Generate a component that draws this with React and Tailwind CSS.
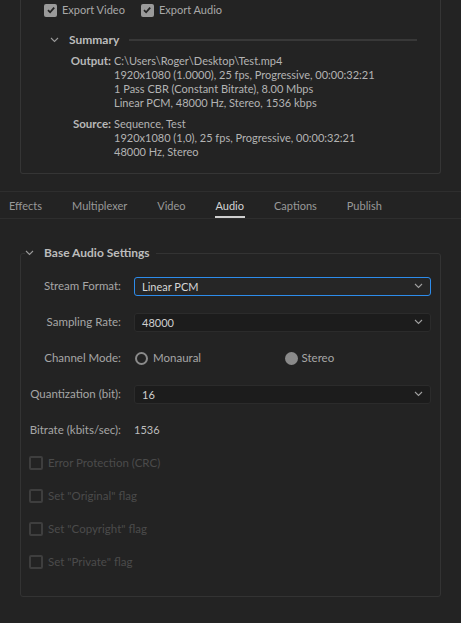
import React from "react";

const Chevron = ({ className = "" }) => (
  <svg width="9" height="6" viewBox="0 0 9 6" className={className}>
    <path d="M1 1 L4.5 4.5 L8 1" fill="none" stroke="currentColor" strokeWidth="1.1" />
  </svg>
);

const CheckOn = () => (
  <span className="w-[13px] h-[13px] rounded-[2px] bg-[#9a9a9a] flex items-center justify-center">
    <svg width="10" height="10" viewBox="0 0 10 10">
      <path d="M2 5.2 L4.1 7.3 L8.2 2.6" fill="none" stroke="#232323" strokeWidth="1.8" />
    </svg>
  </span>
);

const CheckOff = () => (
  <span className="w-[14px] h-[14px] rounded-[2px] border-2 border-[#3e3e3e] shrink-0" />
);

const Select = ({ value, focused }) => (
  <div
    className={
      "flex-1 h-[19px] rounded-[3px] flex items-center justify-between pl-[7px] pr-[7px] text-[11px] " +
      (focused
        ? "bg-[#262626] border border-[#2d8ceb] text-[#d6d6d6]"
        : "bg-[#1c1c1c] border border-[#2b2b2b] text-[#cfcfcf]")
    }
  >
    <span className="leading-none">{value}</span>
    <Chevron className="text-[#a0a0a0]" />
  </div>
);

const Row = ({ label, children, className = "" }) => (
  <div className={"flex items-center h-[20px] " + className}>
    <div className="w-[101px] text-right pr-[1px] text-[#a6a6a6] whitespace-nowrap text-[11.5px]">{label}</div>
    <div className="ml-[12px] w-[297px] flex items-center">{children}</div>
  </div>
);

const DisabledCheck = ({ label, className = "" }) => (
  <div className={"flex items-center gap-[5px] pl-[8px] h-[16px] text-[#4b4b4b] text-[11.5px] " + className}>
    <CheckOff />
    <span>{label}</span>
  </div>
);

export default function App() {
  const tabs = ["Effects", "Multiplexer", "Video", "Audio", "Captions", "Publish"];
  return (
    <div
      className="w-[461px] h-[623px] bg-[#232323] overflow-hidden text-[11px] leading-[14px]"
      style={{ fontFamily: "Lato, 'Noto Sans', sans-serif" }}
    >
      {/* Top summary panel */}
      <div className="ml-[20px] w-[421px] h-[174px] border-x border-b border-[#353535] rounded-b-[3px] flex flex-col">
        <div className="flex items-center h-[20px] pl-[23px] text-[#a8a8a8]">
          <div className="flex items-center gap-[5px]">
            <CheckOn />
            <span>Export Video</span>
          </div>
          <div className="flex items-center gap-[5px] ml-[16px]">
            <CheckOn />
            <span>Export Audio</span>
          </div>
        </div>
        <div className="flex items-center h-[20px] mt-[10px] pl-[29px]">
          <Chevron className="text-[#9a9a9a]" />
          <span className="ml-[10px] font-bold text-[#bcbcbc] text-[12px]">Summary</span>
          <div className="ml-[10px] flex-1 h-[2px] bg-[#383838] mr-[23px]" />
        </div>
        <div className="mt-[4px] flex flex-col gap-[7px] text-[#b3b3b3]">
          <div className="flex">
            <div className="w-[90px] text-right font-bold text-[#b8b8b8] text-[11.5px]">Output:</div>
            <div className="ml-[3px] flex flex-col">
              <span>C:\Users\Roger\Desktop\Test.mp4</span>
              <span>1920x1080 (1.0000), 25 fps, Progressive, 00:00:32:21</span>
              <span>1 Pass CBR (Constant Bitrate), 8.00 Mbps</span>
              <span>Linear PCM, 48000 Hz, Stereo, 1536 kbps</span>
            </div>
          </div>
          <div className="flex">
            <div className="w-[90px] text-right font-bold text-[#b8b8b8] text-[11.5px]">Source:</div>
            <div className="ml-[3px] flex flex-col">
              <span>Sequence, Test</span>
              <span>1920x1080 (1,0), 25 fps, Progressive, 00:00:32:21</span>
              <span>48000 Hz, Stereo</span>
            </div>
          </div>
        </div>
      </div>

      {/* Tabs */}
      <div className="mt-[17px] border-t border-[#2e2e2e] border-b h-[28px] flex items-stretch pl-[9px] gap-[30px] text-[11px]">
        {tabs.map((t) => (
          <div
            key={t}
            className={
              "flex items-center relative " +
              (t === "Audio" ? "text-[#d4d4d4]" : "text-[#999999]")
            }
          >
            <span className="pt-[2px]">{t}</span>
            {t === "Audio" && (
              <span className="absolute left-[-1px] right-[-1px] bottom-[0px] h-[2px] bg-[#cfcfcf]" />
            )}
          </div>
        ))}
      </div>

      {/* Base Audio Settings */}
      <fieldset className="ml-[20px] mt-[27px] w-[421px] h-[351px] border border-[#333333] rounded-[3px] px-0">
        <legend className="ml-[4px] flex items-center pr-[6px]">
          <Chevron className="text-[#9a9a9a]" />
          <span className="ml-[10px] font-bold text-[#bcbcbc] text-[12px]">Base Audio Settings</span>
        </legend>
        <div className="flex flex-col pt-[16px]">
          <Row label="Stream Format:">
            <Select value="Linear PCM" focused />
          </Row>
          <Row label="Sampling Rate:" className="mt-[16px]">
            <Select value="48000" />
          </Row>
          <Row label="Channel Mode:" className="mt-[16px]">
            <div className="grid grid-cols-2 w-full text-[11.5px]">
              <div className="flex items-center gap-[5px] pl-[1px] text-[#a6a6a6]">
                <span className="w-[13px] h-[13px] rounded-full border-2 border-[#8a8a8a]" />
                <span>Monaural</span>
              </div>
              <div className="flex items-center gap-[4px] pl-[2px] text-[#a6a6a6]">
                <span className="w-[13px] h-[13px] rounded-full bg-[#8a8a8a]" />
                <span>Stereo</span>
              </div>
            </div>
          </Row>
          <Row label="Quantization (bit):" className="mt-[16px]">
            <Select value="16" />
          </Row>
          <Row label="Bitrate (kbits/sec):" className="mt-[16px]">
            <span className="text-[#bdbdbd]">1536</span>
          </Row>
          <DisabledCheck label="Error Protection (CRC)" className="mt-[15px]" />
          <DisabledCheck label='Set "Original" flag' className="mt-[17px]" />
          <DisabledCheck label='Set "Copyright" flag' className="mt-[17px]" />
          <DisabledCheck label='Set "Private" flag' className="mt-[17px]" />
        </div>
      </fieldset>
    </div>
  );
}
